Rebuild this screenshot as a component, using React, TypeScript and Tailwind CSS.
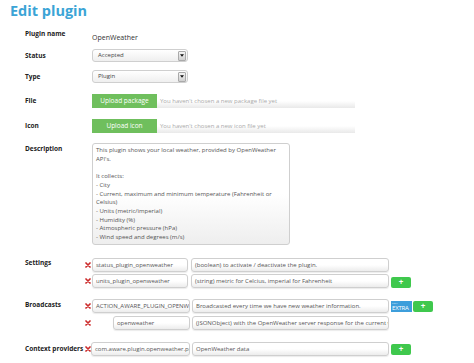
import React from "react";

const inputCls =
  "h-[14px] shrink-0 flex items-center overflow-hidden whitespace-nowrap rounded-[3px] border border-[#cfcfcf] bg-linear-to-b from-white via-white to-[#ececec] px-[3px] text-[6px] text-[#555] shadow-[0_1px_1px_rgba(0,0,0,0.08)]";

const Remove: React.FC = () => (
  <svg className="-ml-[7px] mr-[1px] w-[6px] h-[6px] shrink-0" viewBox="0 0 6 6">
    <path d="M1 1 L5 5 M5 1 L1 5" stroke="#cc2b2b" strokeWidth="1.7" strokeLinecap="round" />
  </svg>
);

const Plus: React.FC = () => (
  <div className="w-[20px] h-[11px] shrink-0 rounded-[2px] bg-[#3fc84d] flex items-center justify-center text-white text-[8px] font-bold leading-none">
    +
  </div>
);

const Extra: React.FC = () => (
  <div className="w-[21px] h-[11px] shrink-0 bg-[#3d9edb] flex flex-col justify-center pl-[1px] text-white leading-none">
    <span className="text-[2.5px] leading-[3px] opacity-80">NEW</span>
    <span className="text-[6px] leading-[6px] tracking-[-0.2px]">EXTRA</span>
  </div>
);

const Row: React.FC<{ label: string; className?: string; labelClass?: string; children?: React.ReactNode }> = ({
  label,
  className,
  labelClass,
  children,
}) => (
  <div className={"flex " + (className ?? "")}>
    <div className={"w-[92px] shrink-0 pl-[25px] text-[6.5px] font-bold text-[#222] leading-[10px] whitespace-nowrap " + (labelClass ?? "")}>
      {label}
    </div>
    <div className="flex-1">{children}</div>
  </div>
);

const SelectBox: React.FC<{ value: string }> = ({ value }) => (
  <div className="w-[96px] h-[13px] flex items-center justify-between rounded-[3px] border border-[#cfcfcf] bg-linear-to-b from-white to-[#efefef] pl-[5px] pr-[1px] text-[6px] text-[#444]">
    <span>{value}</span>
    <div className="w-[8px] h-[10px] border border-[#aaa] rounded-[1px] bg-linear-to-b from-[#f4f4f4] to-[#cfcfcf] flex items-center justify-center">
      <svg viewBox="0 0 6 4" className="w-[4px] h-[3px]">
        <path d="M0 0 L6 0 L3 4 Z" fill="#111" />
      </svg>
    </div>
  </div>
);

const FilePicker: React.FC<{ button: string; note: string }> = ({ button, note }) => (
  <div className="flex h-[14px]">
    <div className="w-[65px] h-[14px] bg-[#6fbf5d] text-white text-[6.5px] flex items-center justify-center">{button}</div>
    <div className="w-[198px] h-[14px] flex items-center pl-[3px] text-[6px] text-[#aaa] bg-linear-to-b from-white via-white to-[#e9e9e9]">
      {note}
    </div>
  </div>
);

const description = `This plugin shows your local weather, provided by OpenWeather API's.

It collects:
- City
- Current, maximum and minimum temperature (Fahrenheit or Celsius)
- Units (metric/imperial)
- Humidity (%)
- Atmospheric pressure (hPa)
- Wind speed and degrees (m/s)
- Cloudiness (% of sky)
- Rain (mm of rain)`;

export default function App() {
  return (
    <div className="w-[474px] h-[363px] overflow-hidden bg-white font-['Open_Sans',sans-serif] text-[#333]">
      <h1 className="pl-[10px] pt-[1px] h-[21px] text-[14.5px] leading-[20px] font-bold text-[#3ba4d6]">Edit plugin</h1>

      <Row label="Plugin name" className="mt-[6px] h-[14px] items-center">
        <span className="text-[7px] text-[#333]">OpenWeather</span>
      </Row>

      <Row label="Status" className="mt-[8px] h-[13px] items-center">
        <SelectBox value="Accepted" />
      </Row>

      <Row label="Type" className="mt-[8px] h-[13px] items-center">
        <SelectBox value="Plugin" />
      </Row>

      <Row label="File" className="mt-[11px] h-[14px] items-center">
        <FilePicker button="Upload package" note="You haven't chosen a new package file yet" />
      </Row>

      <Row label="Icon" className="mt-[11px] h-[14px] items-center">
        <FilePicker button="Upload icon" note="You haven't chosen a new icon file yet" />
      </Row>

      <Row label="Description" className="mt-[10px]" labelClass="mt-[1px]">
        <div className="w-[198px] h-[102px] overflow-hidden rounded-[3px] border border-[#cfcfcf] bg-linear-to-b from-white via-white to-[#eeeeee] px-[3px] pt-[2px] text-[6px] leading-[8.7px] text-[#555] whitespace-pre-line">
          {description}
        </div>
      </Row>

      <Row label="Settings" className="mt-[13px]" labelClass="leading-[9px]">
        <div className="flex flex-col gap-[2px]">
          <div className="flex items-center">
            <Remove />
            <div className={inputCls + " w-[96px]"}>status_plugin_openweather</div>
            <div className={inputCls + " w-[198px] ml-[3px]"}>(boolean) to activate / deactivate the plugin.</div>
          </div>
          <div className="flex items-center">
            <Remove />
            <div className={inputCls + " w-[96px]"}>units_plugin_openweather</div>
            <div className={inputCls + " w-[198px] ml-[3px]"}>(string) metric for Celcius, imperial for Fahrenheit</div>
            <div className="ml-[2px] mt-[2px]">
              <Plus />
            </div>
          </div>
        </div>
      </Row>

      <Row label="Broadcasts" className="mt-[11px]" labelClass="leading-[12px]">
        <div className="flex flex-col gap-[3px]">
          <div className="flex items-center">
            <Remove />
            <div className={inputCls + " w-[98px]"}>ACTION_AWARE_PLUGIN_OPENWEATHER</div>
            <div className={inputCls + " w-[197px] ml-[2px]"}>Broadcasted every time we have new weather information.</div>
            <div className="ml-[2px] flex gap-[1px]">
              <Extra />
              <Plus />
            </div>
          </div>
          <div className="flex items-center">
            <Remove />
            <div className={inputCls + " w-[77px] ml-[21px]"}>openweather</div>
            <div className={inputCls + " w-[197px] ml-[2px]"}>(JSONObject) with the OpenWeather server response for the current weather</div>
          </div>
        </div>
      </Row>

      <Row label="Context providers" className="mt-[12px] h-[14px] items-center">
        <div className="flex items-center">
          <Remove />
          <div className={inputCls + " w-[99px] -ml-[1px]"}>com.aware.plugin.openweather.provider.OpenWeather_Provider</div>
          <div className={inputCls + " w-[197px] ml-[2px]"}>OpenWeather data</div>
          <div className="ml-[2px]">
            <Plus />
          </div>
        </div>
      </Row>
    </div>
  );
}
